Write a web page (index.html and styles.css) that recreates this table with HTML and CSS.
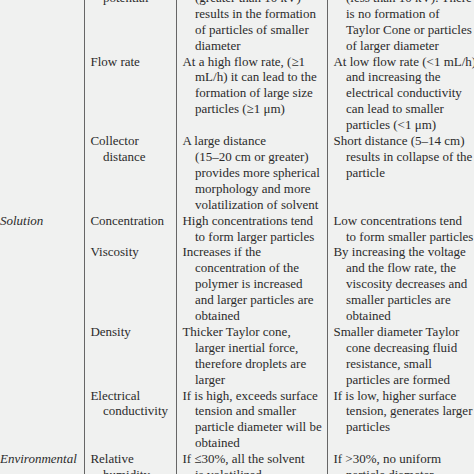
FILE: index.html
```html
<!DOCTYPE html>
<html lang="en">
<head>
<meta charset="utf-8">
<title>Electrospray parameters</title>
<link rel="stylesheet" href="styles.css">
</head>
<body>
<div class="table">
  <div class="cell group"></div>
  <div class="cell param">Applied<br>potential</div>
  <div class="cell effect">High voltage<br>(greater than 10 kV)<br>results in the formation<br>of particles of smaller<br>diameter</div>
  <div class="cell effect">Low voltage<br>(less than 10 kV). There<br>is no formation of<br>Taylor Cone or particles<br>of larger diameter</div>

  <div class="cell group"></div>
  <div class="cell param">Flow rate</div>
  <div class="cell effect">At a high flow rate, (≥1<br>mL/h) it can lead to the<br>formation of large size<br>particles (≥1 μm)</div>
  <div class="cell effect">At low flow rate (&lt;1 mL/h)<br>and increasing the<br>electrical conductivity<br>can lead to smaller<br>particles (&lt;1 μm)</div>

  <div class="cell group"></div>
  <div class="cell param">Collector<br>distance</div>
  <div class="cell effect">A large distance<br>(15–20 cm or greater)<br>provides more spherical<br>morphology and more<br>volatilization of solvent</div>
  <div class="cell effect">Short distance (5–14 cm)<br>results in collapse of the<br>particle</div>

  <div class="cell group">Solution</div>
  <div class="cell param">Concentration</div>
  <div class="cell effect">High concentrations tend<br>to form larger particles</div>
  <div class="cell effect">Low concentrations tend<br>to form smaller particles</div>

  <div class="cell group"></div>
  <div class="cell param">Viscosity</div>
  <div class="cell effect">Increases if the<br>concentration of the<br>polymer is increased<br>and larger particles are<br>obtained</div>
  <div class="cell effect">By increasing the voltage<br>and the flow rate, the<br>viscosity decreases and<br>smaller particles are<br>obtained</div>

  <div class="cell group"></div>
  <div class="cell param">Density</div>
  <div class="cell effect">Thicker Taylor cone,<br>larger inertial force,<br>therefore droplets are<br>larger</div>
  <div class="cell effect">Smaller diameter Taylor<br>cone decreasing fluid<br>resistance, small<br>particles are formed</div>

  <div class="cell group"></div>
  <div class="cell param">Electrical<br>conductivity</div>
  <div class="cell effect">If is high, exceeds surface<br>tension and smaller<br>particle diameter will be<br>obtained</div>
  <div class="cell effect">If is low, higher surface<br>tension, generates larger<br>particles</div>

  <div class="cell group">Environmental</div>
  <div class="cell param">Relative<br>humidity</div>
  <div class="cell effect">If ≤30%, all the solvent<br>is volatilized</div>
  <div class="cell effect">If &gt;30%, no uniform<br>particle diameter</div>
</div>
</body>
</html>
```

FILE: styles.css
```css
html, body {
  margin: 0;
  padding: 0;
  background: #f0f1f0;
  overflow: hidden;
  width: 474px;
  height: 474px;
}

.table {
  display: grid;
  grid-template-columns: 84px 92px 151px 170px;
  margin-top: -26px;
  font-family: "Liberation Serif", "Times New Roman", serif;
  font-size: 13px;
  line-height: 15.9px;
  color: #2b2b2b;
}

.cell {
  white-space: nowrap;
  padding-left: 12.6px;
  text-indent: -12.6px;
}

.group {
  font-style: italic;
  padding-left: 0;
  text-indent: 0;
}

.param {
  border-left: 1.5px solid #666;
  padding-left: 18px;
}

.effect {
  border-left: 1.5px solid #666;
  padding-left: 18px;
}
```
